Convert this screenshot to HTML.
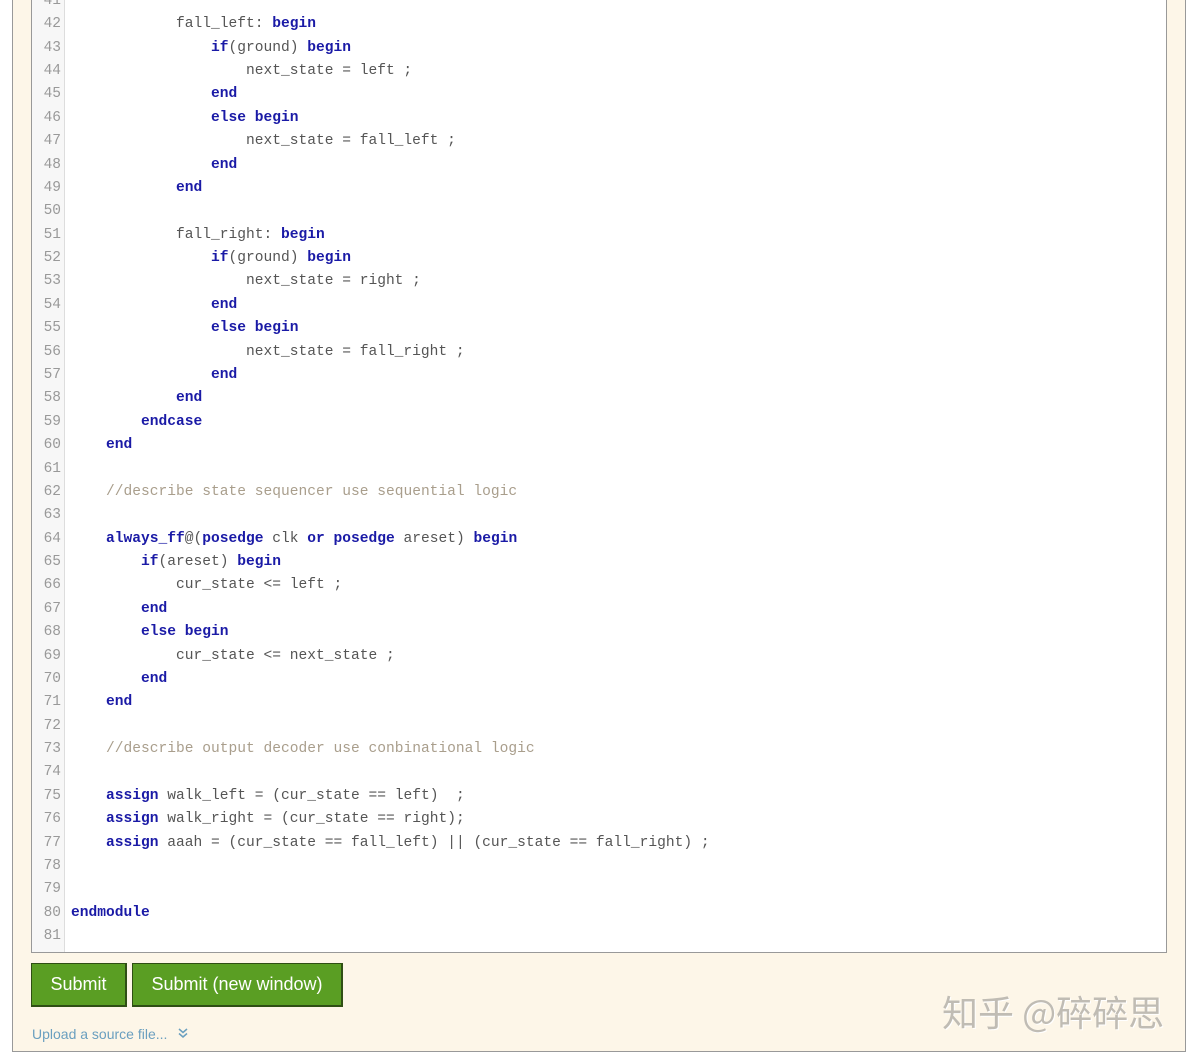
<!DOCTYPE html>
<html><head><meta charset="utf-8"><style>
body{margin:0;width:1198px;height:1057px;background:#fff;position:relative;overflow:hidden;font-family:"Liberation Sans",sans-serif}
.outer{position:absolute;left:12px;top:-5px;width:1172px;height:1056px;background:#fdf6e8;border:1px solid #999;border-top:none}
.ed{position:absolute;left:31px;top:-20px;width:1134px;height:971px;background:#fff;border:1px solid #999}
.gut{position:absolute;left:0;top:0;width:32px;height:100%;background:#f7f7f7;border-right:1px solid #ddd}
.ln{position:absolute;left:0;width:29px;text-align:right;color:#999;font:14.5px/23.38px "Liberation Mono",monospace}
.cd{position:absolute;left:39px;white-space:pre;color:#555;font:14.58px/23.38px "Liberation Mono",monospace}
b{color:#1a1aa6}
.c{color:#a99e8c}
.btn{position:absolute;top:963px;height:41px;background:#5a9e23;border:1px solid #2f4f14;border-width:1px 2px 2px 1px;color:#fff;font-size:18px;line-height:41px;text-align:center;box-sizing:content-box}
</style></head><body>
<div class="outer"></div>
<div class="ed"><div class="gut"></div>
<div id="g"></div>
</div>
<div class="btn" style="left:31px;width:93px">Submit</div>
<div class="btn" style="left:132px;width:208px">Submit (new window)</div>
<div style="position:absolute;left:32px;top:1026px;font-size:14px;color:#6a9fbf">Upload a source file...</div>
<svg style="position:absolute;left:177px;top:1027px" width="12" height="12" viewBox="0 0 12 12"><path d="M2 2l4 3.5 4-3.5M2 6.5l4 3.5 4-3.5" fill="none" stroke="#6a9fbf" stroke-width="1.5"/></svg>
<div style="position:absolute;left:942px;top:985px;font:36px 'Noto Sans CJK SC',sans-serif;color:#c0bcb4;text-shadow:1px 1px 0 #fff;letter-spacing:0px">知乎 @碎碎思</div>
<script>
var L={
41:'',
42:'            fall_left: <b>begin</b>',
43:'                <b>if</b>(ground) <b>begin</b>',
44:'                    next_state = left ;',
45:'                <b>end</b>',
46:'                <b>else begin</b>',
47:'                    next_state = fall_left ;',
48:'                <b>end</b>',
49:'            <b>end</b>',
50:'',
51:'            fall_right: <b>begin</b>',
52:'                <b>if</b>(ground) <b>begin</b>',
53:'                    next_state = right ;',
54:'                <b>end</b>',
55:'                <b>else begin</b>',
56:'                    next_state = fall_right ;',
57:'                <b>end</b>',
58:'            <b>end</b>',
59:'        <b>endcase</b>',
60:'    <b>end</b>',
61:'',
62:'    <span class="c">//describe state sequencer use sequential logic</span>',
63:'',
64:'    <b>always_ff</b>@(<b>posedge</b> clk <b>or</b> <b>posedge</b> areset) <b>begin</b>',
65:'        <b>if</b>(areset) <b>begin</b>',
66:'            cur_state &lt;= left ;',
67:'        <b>end</b>',
68:'        <b>else begin</b>',
69:'            cur_state &lt;= next_state ;',
70:'        <b>end</b>',
71:'    <b>end</b>',
72:'',
73:'    <span class="c">//describe output decoder use conbinational logic</span>',
74:'',
75:'    <b>assign</b> walk_left = (cur_state == left)  ;',
76:'    <b>assign</b> walk_right = (cur_state == right);',
77:'    <b>assign</b> aaah = (cur_state == fall_left) || (cur_state == fall_right) ;',
78:'',
79:'',
80:'<b>endmodule</b>',
81:''};
var h='';
for(var i=41;i<=81;i++){var t=22+(i-42)*23.38-11.69+22;
h+='<div class="ln" style="top:'+t+'px">'+i+'</div><div class="cd" style="top:'+t+'px">'+L[i]+'</div>';}
document.getElementById('g').innerHTML=h;
</script>
</body></html>
